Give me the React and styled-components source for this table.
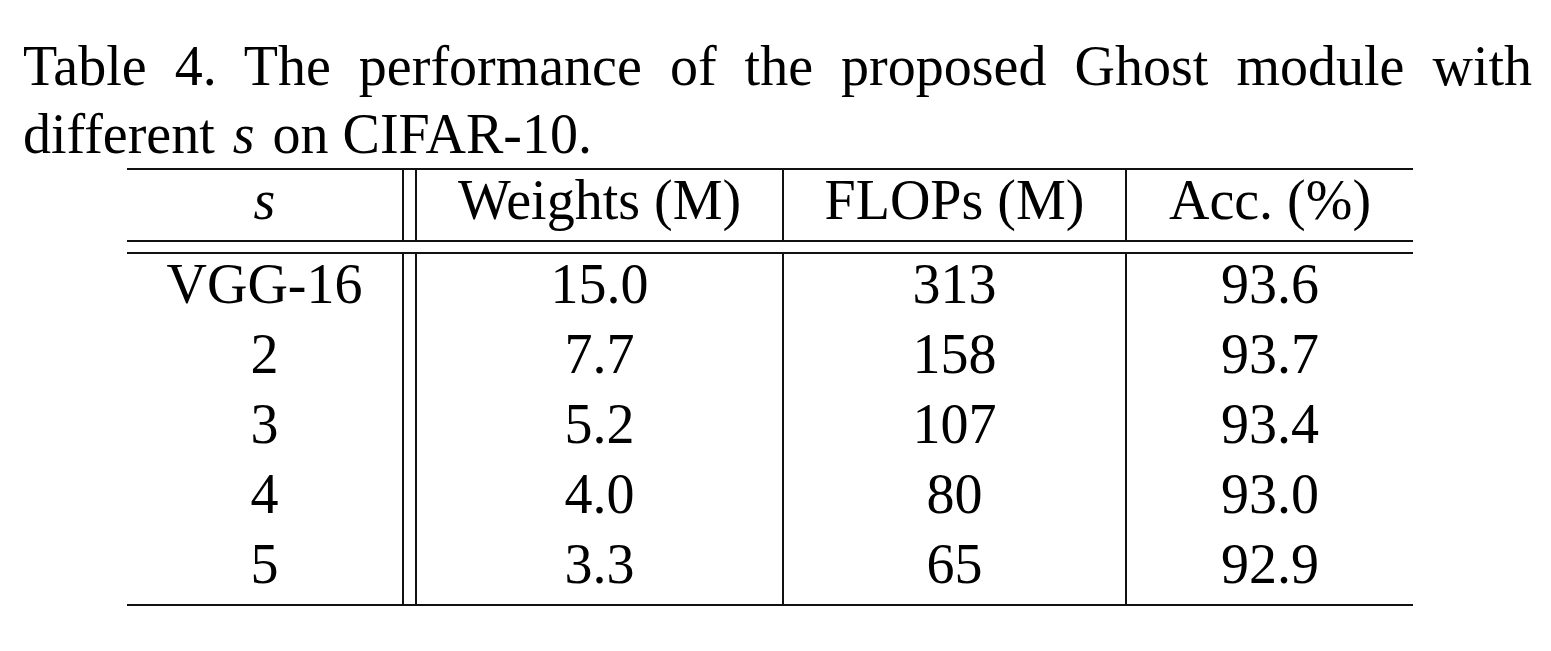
import React from 'react'
import styled, {createGlobalStyle} from 'styled-components'

const GlobalStyle = createGlobalStyle`
	html, body {
		margin: 0;
		padding: 0;
		background: #fff;
	}
	body {
		font-family: "Liberation Serif", "Times New Roman", serif;
		color: #000;
	}
`
const Page = styled.div`
	padding: 32px 0 0 23px;
	width: 1509px;
`
const Caption = styled.p`
	margin: 0;
	font-size: 56px;
	line-height: 68px;
	text-align: justify;
`
const Var = styled.i`
	display: inline-block;
	font-style: italic;
	margin: 0 4px;
`
const Table = styled.div`
	margin-left: 104px;
	width: 1286px;
	font-size: 56px;
`
const Row = styled.div`
	display: grid;
	grid-template-columns: 277px 11px 369px 343px 286px;
	height: 70px;
`
const Head = styled(Row)`
	border-top: 2px solid #111;
	border-bottom: 2px solid #111;
`
const RuleGap = styled.div`
	height: 10px;
`
const Body = styled.div`
	border-top: 2px solid #111;
	border-bottom: 2px solid #111;
`
const Cell = styled.div`
	box-sizing: border-box;
	text-align: center;
	line-height: 60px;
	padding-bottom: 10px;
	white-space: nowrap;
	border-left: ${p => p.$left ? '2px solid #111' : 'none'};
	border-right: ${p => p.$right ? '2px solid #111' : 'none'};
`
const Spacer = styled.div``

const rows = [
	['VGG-16', '15.0', '313', '93.6'],
	['2', '7.7', '158', '93.7'],
	['3', '5.2', '107', '93.4'],
	['4', '4.0', '80', '93.0'],
	['5', '3.3', '65', '92.9'],
]

const Cells = ({values}) => (
	<>
		<Cell $right>{values[0]}</Cell>
		<Spacer />
		<Cell $left $right>{values[1]}</Cell>
		<Cell $right>{values[2]}</Cell>
		<Cell>{values[3]}</Cell>
	</>
)

const App = () => {
	return (
		<Page>
			<GlobalStyle />
			<Caption>
				Table 4. The performance of the proposed Ghost module with different <Var>s</Var> on CIFAR-10.
			</Caption>
			<Table>
				<Head>
					<Cells values={[<Var key="s">s</Var>, 'Weights (M)', 'FLOPs (M)', 'Acc. (%)']} />
				</Head>
				<RuleGap />
				<Body>
					{rows.map(r => (
						<Row key={r[0]}>
							<Cells values={r} />
						</Row>
					))}
				</Body>
			</Table>
		</Page>
	)
}

export default App
